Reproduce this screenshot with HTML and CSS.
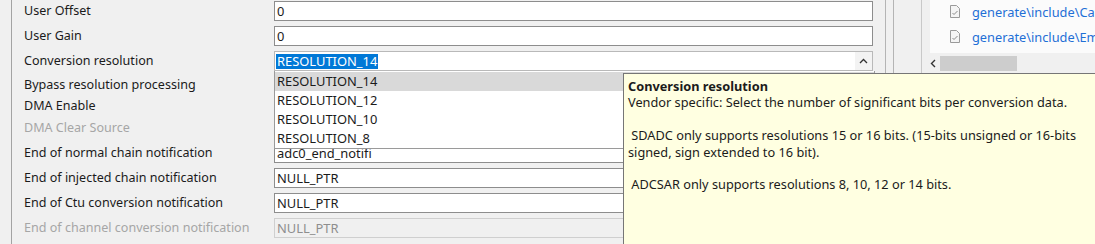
FILE: index.html
```html
<!DOCTYPE html>
<html>
<head>
<meta charset="utf-8">
<link rel="stylesheet" href="styles.css">
</head>
<body>
<div class="app">
  <div class="form-pane">
    <div class="form">
      <div class="label">User Offset</div><div class="cell"><div class="field">0</div></div>
      <div class="label">User Gain</div><div class="cell"><div class="field">0</div></div>
      <div class="label">Conversion resolution</div>
      <div class="cell"><div class="field combo"><span class="sel">RESOLUTION_14</span><span class="chev"><svg width="9" height="6" viewBox="0 0 9 6"><path d="M1 5 L4.5 1.5 L8 5" fill="none" stroke="#333" stroke-width="1.3"/></svg></span></div></div>
      <div class="label">Bypass resolution processing</div><div class="cell"></div>
      <div class="label">DMA Enable</div><div class="cell"></div>
      <div class="label disabled">DMA Clear Source</div><div class="cell"></div>
      <div class="label">End of normal chain notification</div><div class="cell"><div class="field">adc0_end_notifi</div></div>
      <div class="label">End of injected chain notification</div><div class="cell"><div class="field">NULL_PTR</div></div>
      <div class="label">End of Ctu conversion notification</div><div class="cell"><div class="field">NULL_PTR</div></div>
      <div class="label disabled">End of channel conversion notification</div><div class="cell"><div class="field dis">NULL_PTR</div></div>
    </div>
  </div>
  <div class="sash"><div class="sl"></div><div class="sl"></div></div>
  <div class="side">
    <div class="list">
      <div class="item"><svg class="ficon" width="10" height="13" viewBox="0 0 10 13"><path d="M0.5 0.5 H6.5 L9.5 3.5 V12.5 H0.5 Z" fill="#f4f4f4" stroke="#9a9a9a"/><path d="M2.5 8 L4 9.5 L7.5 6" fill="none" stroke="#8a8a8a" stroke-width="1"/></svg><span class="link">generate\include\CanIf_Cfg.h</span></div>
      <div class="item"><svg class="ficon" width="10" height="13" viewBox="0 0 10 13"><path d="M0.5 0.5 H6.5 L9.5 3.5 V12.5 H0.5 Z" fill="#f4f4f4" stroke="#9a9a9a"/><path d="M2.5 8 L4 9.5 L7.5 6" fill="none" stroke="#8a8a8a" stroke-width="1"/></svg><span class="link">generate\include\EmbeddedCfg.h</span></div>
    </div>
    <div class="hscroll"><span class="arrow"><svg width="6" height="9" viewBox="0 0 6 9"><path d="M5 1 L1.5 4.5 L5 8" fill="none" stroke="#333" stroke-width="1.4"/></svg></span><div class="thumb"></div></div>
  </div>

  <div class="dropdown">
    <div class="opt hot">RESOLUTION_14</div>
    <div class="opt">RESOLUTION_12</div>
    <div class="opt">RESOLUTION_10</div>
    <div class="opt">RESOLUTION_8</div>
  </div>

  <div class="tooltip">
    <div class="tl title">Conversion resolution</div>
    <div class="tl">Vendor specific: Select the number of significant bits per conversion data.</div>
    <div class="tl"> </div>
    <div class="tl"> SDADC only supports resolutions 15 or 16 bits. (15-bits unsigned or 16-bits</div>
    <div class="tl">signed, sign extended to 16 bit).</div>
    <div class="tl"> </div>
    <div class="tl"> ADCSAR only supports resolutions 8, 10, 12 or 14 bits.</div>
  </div>
</div>
</body>
</html>
```

FILE: styles.css
```css
html, body {
  margin: 0;
  padding: 0;
}
body {
  width: 1095px;
  height: 244px;
  overflow: hidden;
  background: #f0f0f0;
  font-family: "Noto Sans", "Open Sans", sans-serif;
  font-size: 12.55px;
  color: #1b1b1b;
}
.app {
  position: relative;
  display: flex;
  width: 1095px;
  height: 244px;
  overflow: hidden;
}
.form-pane {
  width: 868px;
  margin-left: 11px;
  border-left: 1px solid #a3a3a3;
  flex: none;
}
.form {
  display: grid;
  grid-template-columns: 262px 599px;
  grid-template-rows: 25px 25px 25px 22px 20px 25px 25px 25px 25px 25px;
  margin-top: -2px;
}
.label {
  padding-left: 12px;
  align-self: center;
  white-space: nowrap;
  line-height: 16px;
  padding-top: 1px;
}
.label.disabled {
  color: #a6a6a6;
}
.cell {
  padding-top: 3px;
}
.field {
  box-sizing: border-box;
  height: 20px;
  border: 1px solid #8d8d8d;
  background: #fff;
  padding-left: 2px;
  line-height: 18px;
  font-size: 12.9px;
  white-space: nowrap;
  overflow: hidden;
}
.field.dis {
  background: #f0f0f0;
  border-color: #cfcfcf;
  color: #8e8e8e;
}
.combo {
  display: flex;
  align-items: center;
  border-color: #b9b9b9;
  padding-left: 1px;
}
.sel {
  background: #0078d7;
  color: #fff;
  line-height: 15px;
  padding: 0 1px;
}
.chev {
  margin-left: auto;
  width: 17px;
  height: 18px;
  background: #f3f3f3;
  display: flex;
  align-items: center;
  justify-content: center;
}
.sash {
  width: 41px;
  flex: none;
  display: flex;
  padding-left: 5px;
  gap: 7px;
  box-sizing: border-box;
}
.sl {
  width: 1px;
  height: 244px;
  background: #b4b4b4;
}
.side {
  flex: 1;
  border-left: 1px solid #c9c9c9;
  padding-left: 8px;
  overflow: hidden;
}
.list {
  background: #fbfbfb;
  height: 54px;
  margin-top: -1px;
  padding-left: 20px;
  overflow: hidden;
}
.item {
  display: flex;
  align-items: center;
  height: 25px;
  white-space: nowrap;
}
.ficon {
  flex: none;
}
.link {
  margin-left: 12px;
  color: #1f6fd6;
  font-size: 12.8px;
}
.hscroll {
  display: flex;
  align-items: center;
  height: 18px;
  margin-top: 1px;
}
.arrow {
  width: 10px;
  display: flex;
  justify-content: flex-start;
}
.thumb {
  width: 77px;
  height: 15px;
  background: #cdcdcd;
}
.dropdown {
  position: absolute;
  left: 274px;
  top: 71px;
  width: 601px;
  height: 78px;
  box-sizing: border-box;
  border: 1px solid #9a9a9a;
  border-top: none;
  background: #fff;
  padding-top: 1px;
  font-size: 12.9px;
}
.opt {
  height: 19px;
  line-height: 19px;
  padding-left: 2px;
}
.opt.hot {
  background: #d9d9d9;
}
.tooltip {
  position: absolute;
  left: 623px;
  top: 73px;
  width: 500px;
  height: 200px;
  background: #ffffe1;
  border: 1px solid #767676;
  padding: 4px 0 0 4px;
  font-size: 12.75px;
}
.tl {
  white-space: pre;
  line-height: 16.4px;
  height: 16.4px;
}
.title {
  font-weight: bold;
}
```
